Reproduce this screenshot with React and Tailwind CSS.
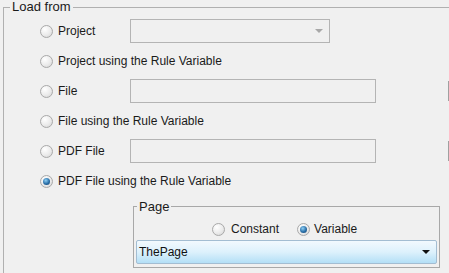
import React from "react";

const Radio = ({ checked }) => (
  <span className="relative flex items-center justify-center w-[13px] h-[13px] shrink-0 rounded-full border border-[#a9a9a9] bg-[radial-gradient(circle_at_35%_30%,#ffffff,#ebebeb_55%,#d2d2d2)]">
    {checked && (
      <span className="w-[7px] h-[7px] rounded-full bg-[radial-gradient(circle_at_40%_35%,#8fd0f5,#2a6fa8_55%,#123c66)]" />
    )}
  </span>
);

const Row = ({ label, checked, children, labelWidth = "w-[72px]" }) => (
  <div className="flex items-center h-[30px] pl-[36px]">
    <Radio checked={checked} />
    <span className={`ml-[5px] ${labelWidth} whitespace-nowrap`}>{label}</span>
    {children}
  </div>
);

const TextBox = () => (
  <div className="w-[246px] h-[24px] border border-[#b4b4b4] bg-[#f0f0f0]" />
);

const App = () => {
  return (
    <div className="w-[449px] h-[273px] overflow-hidden bg-[#f0f0f0] font-['Liberation_Sans',Arial,sans-serif] text-[12px] leading-[14px] text-[#1a1a1a]">
      <div className="relative ml-[3px] mt-[7px] w-[500px] h-[300px] border-l border-t border-[#b0b0b0]">
        <span className="absolute -top-[8px] left-[6px] px-[2px] bg-[#f0f0f0] text-[13px]">Load from</span>

        <div className="pt-[8px]">
          <Row label="Project">
            <div className="flex items-center justify-end w-[200px] h-[24px] border border-[#b4b4b4] bg-[#f0f0f0] pr-[6px]">
              <span className="w-0 h-0 border-l-[4px] border-r-[4px] border-t-[4px] border-l-transparent border-r-transparent border-t-[#a8a8a8]" />
            </div>
          </Row>
          <Row label="Project using the Rule Variable" labelWidth="w-auto" />
          <Row label="File">
            <TextBox />
            <div className="ml-[72px] w-[10px] h-[20px] border-l border-[#a0a0a0]" />
          </Row>
          <Row label="File using the Rule Variable" labelWidth="w-auto" />
          <Row label="PDF File">
            <TextBox />
            <div className="ml-[72px] w-[10px] h-[20px] border-l border-[#a0a0a0]" />
          </Row>
          <Row label="PDF File using the Rule Variable" labelWidth="w-auto" checked />
        </div>

        <div className="relative ml-[129px] mt-[10px] w-[307px] h-[62px] border border-[#a8a8a8]">
          <span className="absolute -top-[7px] left-[3px] px-[2px] bg-[#f0f0f0] text-[13px]">Page</span>
          <div className="flex items-center h-[20px] mt-[12px] pl-[78px]">
            <Radio />
            <span className="ml-[6px]">Constant</span>
            <span className="ml-[18px]"><Radio checked /></span>
            <span className="ml-[4px]">Variable</span>
          </div>
          <div className="flex items-center justify-between mx-[2px] mt-[1px] h-[24px] border border-[#a3bdd2] rounded-[2px] bg-gradient-to-b from-[#f2f9fe] via-[#ddf1fc] to-[#b3dff6] pl-[2px] pr-[6px]">
            <span className="text-[#111]">ThePage</span>
            <span className="w-0 h-0 border-l-[4px] border-r-[4px] border-t-[4px] border-l-transparent border-r-transparent border-t-[#111]" />
          </div>
        </div>
      </div>
    </div>
  );
};

export default App;
